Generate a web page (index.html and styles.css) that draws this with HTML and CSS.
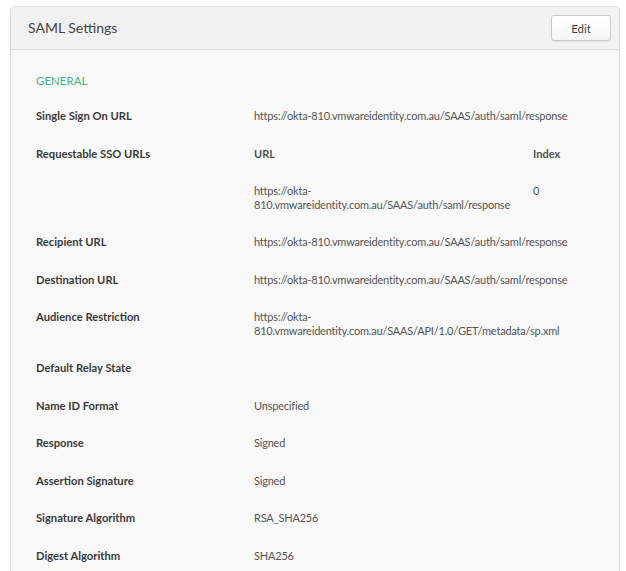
FILE: index.html
```html
<!DOCTYPE html>
<html>
<head>
<meta charset="utf-8">
<link rel="stylesheet" href="styles.css">
</head>
<body>
<div class="panel">
  <div class="panel-head">
    <h2 class="title">SAML Settings</h2>
    <button class="btn">Edit</button>
  </div>
  <div class="panel-body">
    <div class="section">GENERAL</div>
    <div class="row"><div class="label">Single Sign On URL</div><div class="value">https://okta-810.vmwareidentity.com.au/SAAS/auth/saml/response</div></div>
    <div class="row row-nested">
      <div class="label">Requestable SSO URLs</div>
      <div class="subtable">
        <div class="subrow"><div class="subhead url-col">URL</div><div class="subhead">Index</div></div>
        <div class="subrow"><div class="value url-col">https://okta-810.vmwareidentity.com.au/SAAS/auth/saml/response</div><div class="value">0</div></div>
      </div>
    </div>
    <div class="row"><div class="label">Recipient URL</div><div class="value">https://okta-810.vmwareidentity.com.au/SAAS/auth/saml/response</div></div>
    <div class="row"><div class="label">Destination URL</div><div class="value">https://okta-810.vmwareidentity.com.au/SAAS/auth/saml/response</div></div>
    <div class="row"><div class="label">Audience Restriction</div><div class="value">https://okta-810.vmwareidentity.com.au/SAAS/API/1.0/GET/metadata/sp.xml</div></div>
    <div class="row"><div class="label">Default Relay State</div><div class="value"></div></div>
    <div class="row"><div class="label">Name ID Format</div><div class="value">Unspecified</div></div>
    <div class="row"><div class="label">Response</div><div class="value">Signed</div></div>
    <div class="row"><div class="label">Assertion Signature</div><div class="value">Signed</div></div>
    <div class="row"><div class="label">Signature Algorithm</div><div class="value">RSA_SHA256</div></div>
    <div class="row"><div class="label">Digest Algorithm</div><div class="value">SHA256</div></div>
  </div>
</div>
</body>
</html>
```
FILE: styles.css
```css
html, body {
  margin: 0;
  padding: 0;
  background: #ffffff;
}
body {
  font-family: Lato, "Open Sans", Arial, sans-serif;
  padding: 6px 6px 0 10px;
  overflow: hidden;
}
.panel {
  width: 608px;
  border: 1px solid #dcdcdc;
  border-radius: 4px;
  background: #f9f9f9;
}
.panel-head {
  display: flex;
  align-items: center;
  justify-content: space-between;
  height: 42px;
  padding: 0 8px 0 17px;
  background: #f2f2f2;
  border-bottom: 1px solid #dcdcdc;
  border-radius: 4px 4px 0 0;
}
.title {
  margin: 0;
  font-size: 14px;
  font-weight: 400;
  color: #444;
  position: relative;
  top: -1px;
}
.btn {
  width: 60px;
  height: 26px;
  border: 1px solid #c8c8c8;
  border-radius: 3px;
  background: linear-gradient(#ffffff, #f7f7f7);
  box-shadow: 0 1px 1px rgba(0,0,0,0.06);
  font-family: inherit;
  font-size: 11.5px;
  color: #444;
}
.panel-body {
  padding: 23px 26px 0 25px;
}
.section {
  font-size: 11.5px;
  color: #45b088;
  line-height: 16px;
  margin-bottom: 8px;
}
.row {
  display: grid;
  grid-template-columns: 218px 1fr;
  line-height: 13.5px;
}
.row > .label, .row > .value {
  padding: 12px 0;
}
.label {
  font-size: 11.2px;
  font-weight: 700;
  color: #3a3a3a;
}
.value {
  font-size: 11px;
  letter-spacing: -0.2px;
  color: #555;
}
.subtable {
  display: flex;
  flex-direction: column;
}
.subrow {
  display: grid;
  grid-template-columns: 279px 1fr;
}
.subrow > div {
  padding: 12px 0;
}
.subhead {
  font-size: 11px;
  font-weight: 700;
  color: #505050;
}
```
